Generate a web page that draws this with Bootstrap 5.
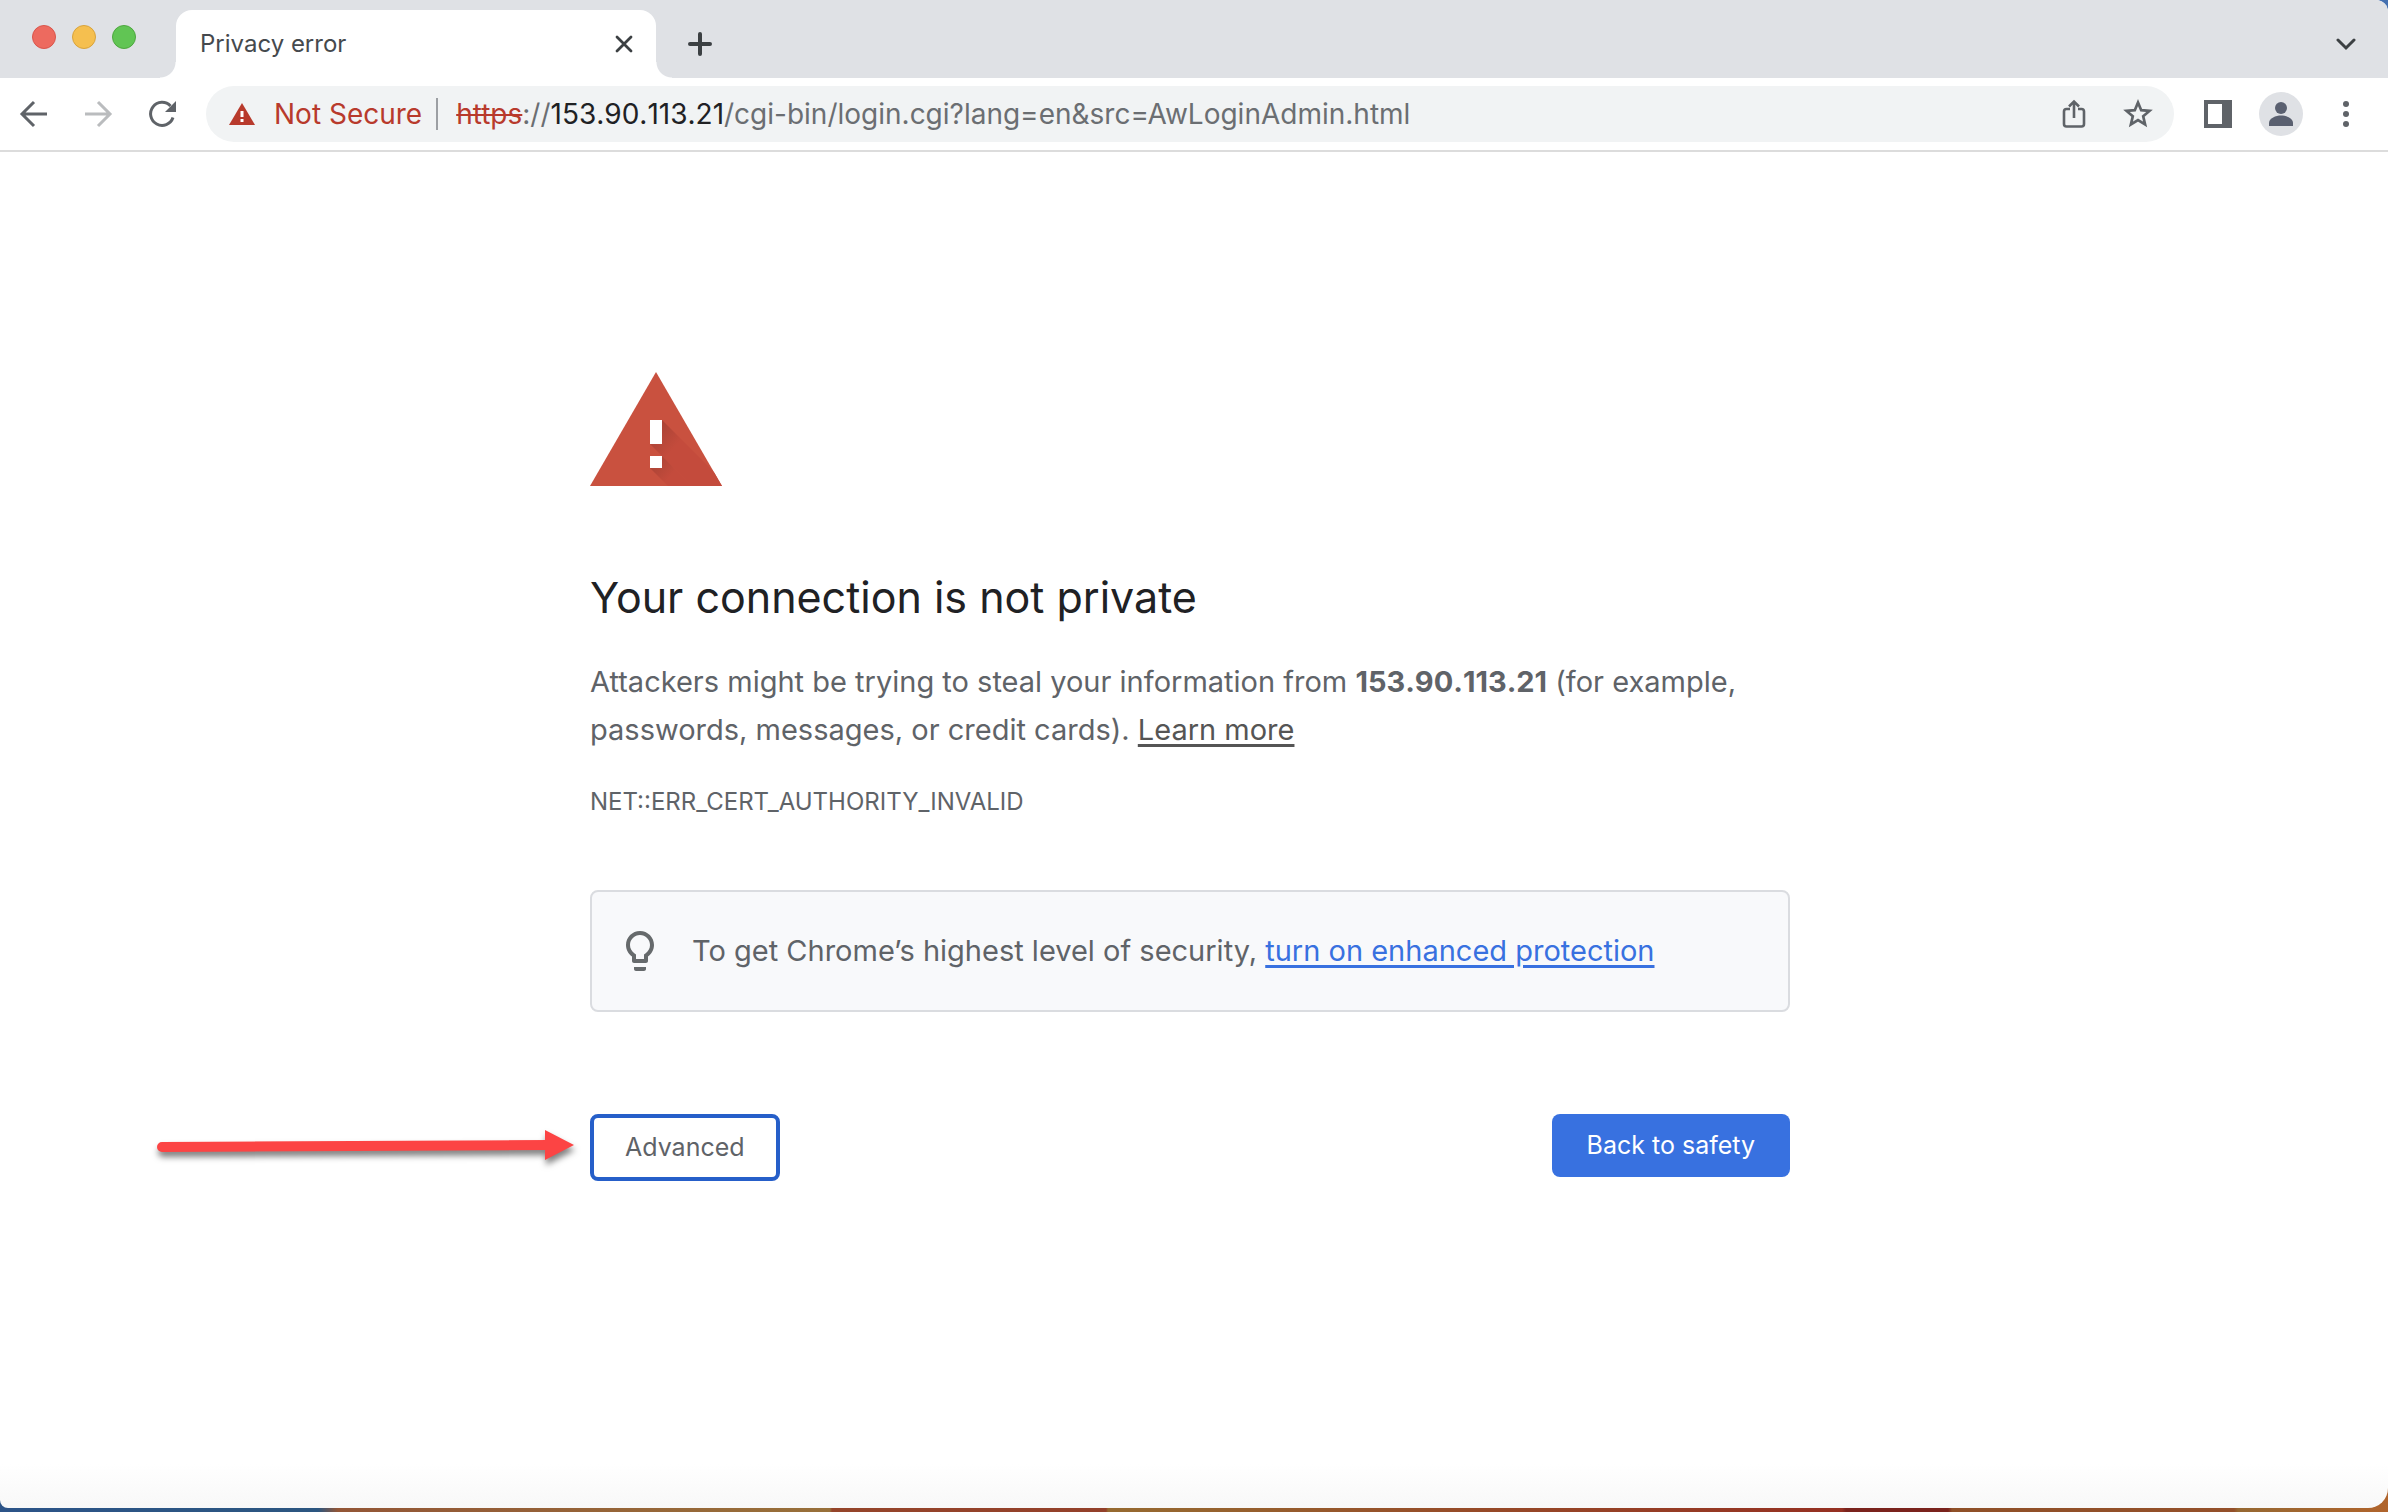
<!DOCTYPE html>
<html lang="en">
<head>
<meta charset="utf-8">
<meta name="viewport" content="width=device-width, initial-scale=1">
<title>Privacy error</title>
<link href="https://cdn.jsdelivr.net/npm/bootstrap@5.3.0/dist/css/bootstrap.min.css" rel="stylesheet">
<style>
  body {
    font-family: Inter, "Liberation Sans", sans-serif;
    color: #5f6368;
    background:
      linear-gradient(#4470b0, #4470b0) top right / 24px 24px no-repeat,
      linear-gradient(90deg, #2c5488 0, #2c5680 318px, #935636 338px, #98703a 830px, #95452a 832px, #93402a 1106px, #966a30 1108px, #96642f 1200px, #964a28 1480px, #953022 1842px, #7a231d 1846px, #7a231d 1948px, #8f5028 1952px, #94502a 2234px, #966832 2238px, #b0642c 100%);
  }
  .browser-window { background: linear-gradient(#fff calc(100% - 44px), #f8f8f8); border-radius: 0 12px 20px 8px; overflow: hidden; }
  .tab-strip { background: #dfe1e5; padding: 10px 32px 0 32px; height: 78px; }
  .lights { margin: 15px 40px 0 0; gap: 16px; }
  .light { width: 24px; height: 24px; border-radius: 50%; border: 1px solid; padding: 0; }
  .light-close { background: #ed6a5f; border-color: #d9554b; }
  .light-min { background: #f5bf4f; border-color: #d8a33c; }
  .light-zoom { background: #61c554; border-color: #4ea73f; }
  .page-tab { position: relative; width: 480px; height: 68px; padding: 0 22px 0 24px; background: #fff; border-radius: 16px 16px 0 0; color: #45494d; font-size: 24px; }
  .page-tab::before, .page-tab::after { content: ""; position: absolute; bottom: 0; width: 16px; height: 16px; }
  .page-tab::before { right: 100%; background: radial-gradient(circle at 0 0, transparent 15px, #fff 16px); }
  .page-tab::after { left: 100%; background: radial-gradient(circle at 100% 0, transparent 15px, #fff 16px); }
  .plain { border: 0; padding: 0; background: none; line-height: 0; color: inherit; }
  .plain svg, .hint svg { display: block; }
  .tool-bar { height: 74px; padding: 8px 32px 8px 18px; border-bottom: 2px solid #dcdcdc; color: #5f6368; background: #fff; }
  .nav-tools { gap: 32px; margin-right: 28px; }
  .omnibox { height: 56px; border-radius: 28px; background: #f1f3f4; padding: 0 20px 0 22px; font-size: 28px; line-height: 36px; }
  .danger { color: #b83a2c; }
  .not-secure { gap: 18px; }
  .rule-line { width: 2px; height: 32px; background: #9c9fa3; margin: 0 18px 0 14px; }
  .host { color: #202124; }
  .host, .body-text strong { font-kerning: none; }
  .address { color: #6b6e72; outline: 0; }
  .box-actions { gap: 32px; }
  .side-actions { padding-left: 28px; gap: 25px; }
  .page { padding: 220px 8px 60px 0; }
  .interstitial { width: 1200px; max-width: 100%; }
  .headline { font-size: 43px; line-height: 58px; color: #202124; font-weight: 400; margin: 82px 0 32px; }
  .body-text { font-size: 29px; line-height: 48px; margin-bottom: 24px; }
  .body-text a { color: #555; }
  .error-code { font-size: 24px; line-height: 48px; margin-bottom: 64px; }
  .hint { border: 2px solid #dadce0; border-radius: 8px; background: #f8f9fb; padding: 35px 24px; font-size: 29px; line-height: 44px; gap: 28px; }
  .hint a { color: #3871e0; }
  .interstitial a { text-underline-offset: 4px; text-decoration-thickness: 3px; }
  .actions { margin-top: 102px; }
  .act { font-size: 25px; line-height: 39px; border-radius: 8px; padding: 12px 35px; }
  .act-advanced { border: 4px solid #265fc9; color: #5f6368; padding: 10px 31px; background: #fff; }
  .act-safe { background: #3871e0; color: #fff; border: 0; }
  .pointer-arrow { position: absolute; right: calc(100% + 10px); top: 0; width: 430px; height: 60px; pointer-events: none; filter: drop-shadow(1px 5px 3px rgba(0, 0, 0, .5)); }
</style>
<script src="https://cdn.jsdelivr.net/npm/bootstrap@5.3.0/dist/js/bootstrap.bundle.min.js"></script>
</head>
<body class="min-vh-100 d-flex flex-column pb-1">
<div class="browser-window flex-grow-1 d-flex flex-column">
  <header>
    <div class="tab-strip d-flex">
      <div class="lights d-flex">
        <button class="light light-close" type="button" aria-label="Close window"></button>
        <button class="light light-min" type="button" aria-label="Minimize"></button>
        <button class="light light-zoom" type="button" aria-label="Zoom"></button>
      </div>
      <div class="page-tab d-flex align-items-center justify-content-between">
        <span>Privacy error</span>
        <button class="plain" type="button" aria-label="Close tab"><svg width="20" height="20" viewBox="0 0 20 20" stroke="#3c4043" stroke-width="2.800" fill="none" stroke-linecap="round"><path d="M3 3 17 17M17 3 3 17"/></svg></button>
      </div>
      <button class="plain px-4" type="button" aria-label="New tab"><svg class="ms-2" width="24" height="24" viewBox="0 0 24 24" stroke="#3c4043" stroke-width="4" stroke-linecap="round"><path d="M12 2V22M2 12H22"/></svg></button>
      <button class="plain ms-auto" type="button" aria-label="Search tabs"><svg width="20" height="14" viewBox="0 0 20 14" fill="none" stroke="#3c4043" stroke-width="3" stroke-linecap="round"><path d="M2 3 10 11 18 3"/></svg></button>
    </div>
    <div class="tool-bar d-flex align-items-center">
      <div class="nav-tools d-flex">
        <button class="plain" type="button" aria-label="Back"><svg width="32" height="32" viewBox="0 0 32 32" fill="none" stroke="currentColor" stroke-width="3"><path d="M29 16H4M16 4 4 16 16 28"/></svg></button>
        <button class="plain" type="button" aria-label="Forward" disabled><svg width="32" height="32" viewBox="0 0 32 32" fill="none" stroke="#babcbe" stroke-width="3"><path d="M3 16H28M16 4 28 16 16 28"/></svg></button>
        <button class="plain" type="button" aria-label="Reload"><svg width="32" height="32" viewBox="0 0 32 32"><path d="M27 19.500A11.500 11.500 0 1 1 24.500 8" fill="none" stroke="currentColor" stroke-width="3"/><path d="M30 3V14H19Z" fill="currentColor"/></svg></button>
      </div>
      <div class="omnibox flex-grow-1 d-flex align-items-center">
        <div class="not-secure danger d-flex align-items-center">
          <svg width="28" height="24" viewBox="0 0 28 24"><path d="M14 1 27 23H1Z" fill="#b83a2c"/><path d="M12.500 9h3v6h-3zM12.500 17h3v3h-3z" fill="#fff"/></svg>
          <span>Not Secure</span>
        </div>
        <span class="rule-line"></span>
        <div class="address text-nowrap" role="textbox" aria-label="Address" contenteditable="true" spellcheck="false"><s class="danger">https</s>://<span class="host">153.90.113.21</span>/cgi-bin/login.cgi?lang=en&amp;src=AwLoginAdmin.html</div>
        <div class="box-actions d-flex ms-auto align-items-center">
          <button class="plain" type="button" aria-label="Share"><svg width="32" height="32" viewBox="0 0 32 32" fill="none" stroke="currentColor" stroke-width="2.600"><path d="M12 11H8.500Q6 11 6 13.500V26Q6 28.500 8.500 28.500H23.500Q26 28.500 26 26V13.500Q26 11 23.500 11H20M16 20V3.500M11 8.500 16 3.500 21 8.500"/></svg></button>
          <button class="plain" type="button" aria-label="Bookmark"><svg width="32" height="32" viewBox="0 0 32 32" fill="none" stroke="currentColor" stroke-width="2.700"><path d="M16 4.500 19.200 12.200 27.500 12.900 21.200 18.300 23.100 26.400 16 22.100 8.900 26.400 10.800 18.300 4.500 12.900 12.800 12.200Z"/></svg></button>
        </div>
      </div>
      <div class="side-actions d-flex align-items-center">
        <button class="plain" type="button" aria-label="Side panel"><svg width="32" height="28" viewBox="0 0 32 28"><path fill-rule="evenodd" d="M2 0H30V28H2ZM6 4V24H20V4Z" fill="currentColor"/></svg></button>
        <button class="plain" type="button" aria-label="Profile"><svg width="44" height="44" viewBox="2 0 44 44"><circle cx="24" cy="22" r="22" fill="#dfe1e5"/><g fill="#5a6070"><circle cx="24" cy="16" r="6"/><path d="M12 34V31C12 26 19 23.500 24 23.500S36 26 36 31V34Z"/></g></svg></button>
        <button class="plain ms-2" type="button" aria-label="Menu"><svg width="20" height="28" viewBox="0 0 20 28" fill="currentColor"><circle cx="10" cy="4" r="3"/><circle cx="10" cy="14" r="3"/><circle cx="10" cy="24" r="3"/></svg></button>
      </div>
    </div>
  </header>
  <main class="page">
    <div class="interstitial mx-auto">
      <svg class="d-block" width="132" height="114" viewBox="0 0 132 114" role="img" aria-label="Warning">
        <defs>
          <linearGradient id="shadeBar" gradientUnits="userSpaceOnUse" x1="66" y1="60" x2="84" y2="76"><stop offset="0" stop-color="#ac4436"/><stop offset="1" stop-color="#c44b3c"/></linearGradient>
          <linearGradient id="shadeDot" gradientUnits="userSpaceOnUse" x1="66" y1="88" x2="82" y2="102"><stop offset="0" stop-color="#ac4436"/><stop offset="1" stop-color="#c44b3c"/></linearGradient>
          <clipPath id="tri"><path d="M66 0 132 114H0Z"/></clipPath>
        </defs>
        <path d="M66 0 132 114H0Z" fill="#c9513f"/>
        <g clip-path="url(#tri)">
          <path d="M72 48 138 114H102L60 72Z" fill="url(#shadeBar)"/>
          <path d="M72 84 102 114H78L60 96Z" fill="url(#shadeDot)"/>
        </g>
        <path d="M60 48H72V72H60ZM60 84H72V96H60Z" fill="#fff"/>
      </svg>
      <h1 class="headline">Your connection is not private</h1>
      <p class="body-text">Attackers might be trying to steal your information from <strong>153.90.113.21</strong> (for example, passwords, messages, or credit cards). <a href="#">Learn more</a></p>
      <div class="error-code">NET::ERR_CERT_AUTHORITY_INVALID</div>
      <div class="hint d-flex align-items-center">
        <svg width="48" height="48" viewBox="0 0 24 24" fill="#666a6c" aria-hidden="true"><path d="M9 21c0 .55.45 1 1 1h4c.55 0 1-.45 1-1v-1H9v1zM12 2C8.140 2 5 5.140 5 9c0 2.380 1.190 4.470 3 5.740V17c0 .55.45 1 1 1h6c.55 0 1-.45 1-1v-2.260c1.810-1.270 3-3.360 3-5.740 0-3.860-3.140-7-7-7zm2.850 11.100l-.85.6V16h-4v-2.300l-.85-.6C7.800 12.160 7 10.630 7 9c0-2.760 2.240-5 5-5s5 2.240 5 5c0 1.630-.8 3.160-2.150 4.100z"/></svg>
        <span>To get Chrome’s highest level of security, <a href="#">turn on enhanced protection</a></span>
      </div>
      <div class="actions d-flex justify-content-between align-items-start position-relative">
        <svg class="pointer-arrow" viewBox="0 0 430 60" aria-hidden="true"><path d="M12 33 400 31" stroke="#fc4444" stroke-width="10" stroke-linecap="round"/><path d="M395 16 424 31 395 46Z" fill="#fc4444"/></svg>
        <button class="btn act act-advanced" type="button">Advanced</button>
        <button class="btn act act-safe" type="button">Back to safety</button>
      </div>
    </div>
  </main>
</div>
</body>
</html>
